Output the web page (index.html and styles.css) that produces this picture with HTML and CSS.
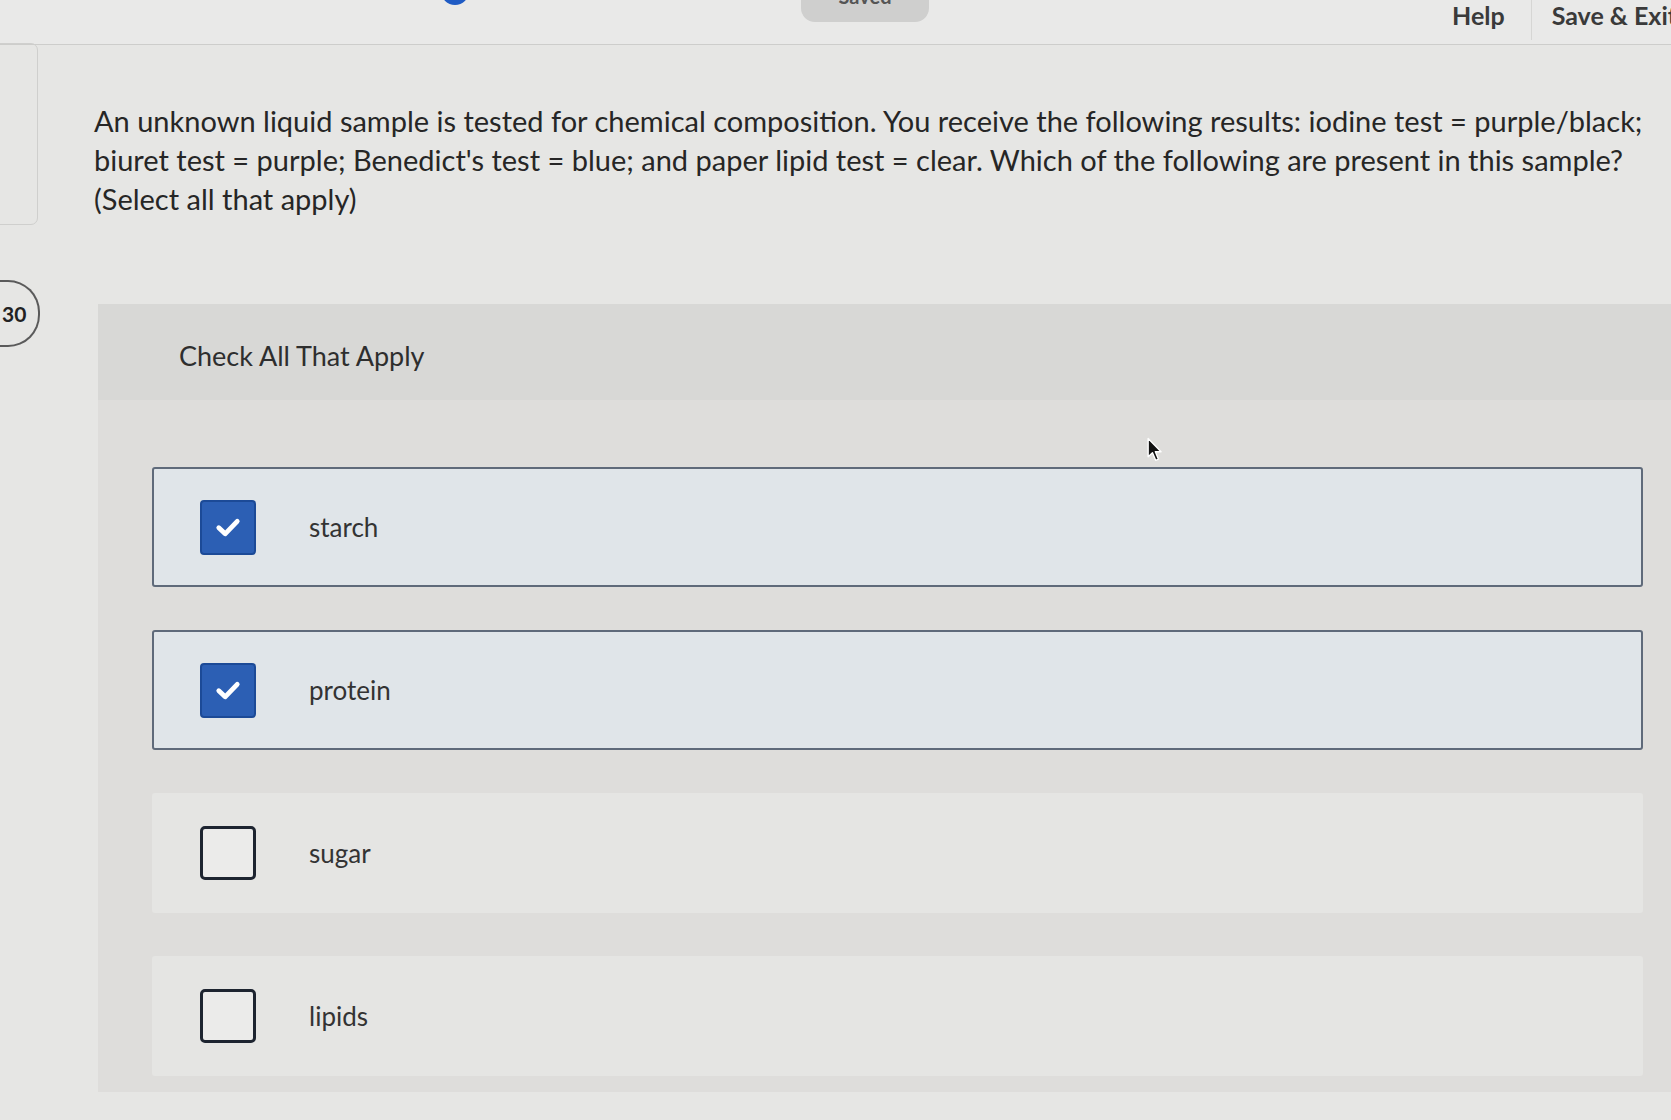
FILE: index.html
```html
<!DOCTYPE html>
<html lang="en">
<head>
<meta charset="utf-8">
<title>Check All That Apply</title>
<link rel="stylesheet" href="styles.css">
</head>
<body>
<div class="page">
  <header class="topbar">
    <span class="dot"></span>
    <span class="saved">Saved</span>
    <nav class="nav">
      <span class="help">Help</span>
      <span class="divider"></span>
      <span class="save">Save &amp; Exit</span>
    </nav>
  </header>

  <div class="content">
    <aside class="side">
      <div class="sidecard"></div>
      <div class="qnum">30</div>
    </aside>

    <main class="main">
      <p class="question">An unknown liquid sample is tested for chemical composition. You receive the following results: iodine test = purple/black;<br>biuret test = purple; Benedict's test = blue; and paper lipid test = clear. Which of the following are present in this sample?<br>(Select all that apply)</p>

      <section class="panel">
        <div class="panel-head">Check All That Apply</div>
        <ul class="options">
          <li class="option selected">
            <span class="box checked"><svg viewBox="0 0 24 24" width="34" height="34"><polyline points="5.5,12.5 10,16.8 18.5,8" fill="none" stroke="#fff" stroke-width="3.4" stroke-linecap="round" stroke-linejoin="round"/></svg></span>
            <span class="label">starch</span>
          </li>
          <li class="option selected">
            <span class="box checked"><svg viewBox="0 0 24 24" width="34" height="34"><polyline points="5.5,12.5 10,16.8 18.5,8" fill="none" stroke="#fff" stroke-width="3.4" stroke-linecap="round" stroke-linejoin="round"/></svg></span>
            <span class="label">protein</span>
          </li>
          <li class="option">
            <span class="box"></span>
            <span class="label">sugar</span>
          </li>
          <li class="option">
            <span class="box"></span>
            <span class="label">lipids</span>
          </li>
        </ul>
      </section>
    </main>
  </div>

  <svg class="cursor" width="16" height="26" viewBox="0 0 14 22"><path d="M1 1 L1 17 L4.8 13.4 L7.6 20 L10 19 L7.3 12.5 L12.3 12.5 Z" fill="#111" stroke="#fff" stroke-width="1.2" stroke-linejoin="round"/></svg>
</div>
</body>
</html>
```
FILE: styles.css
```css
html, body {
  margin: 0;
  padding: 0;
}
body {
  width: 1671px;
  height: 1120px;
  overflow: hidden;
  background: #e6e6e4;
  font-family: Lato, "Open Sans", Arial, sans-serif;
  color: #2c2c2c;
}
.page {
  position: relative;
  width: 1671px;
  height: 1120px;
  overflow: hidden;
}

/* top bar */
.topbar {
  display: flex;
  align-items: flex-start;
  height: 44px;
  border-bottom: 1px solid #cdcdcb;
  background: #e9e9e8;
}
.dot {
  flex: 0 0 auto;
  width: 28px;
  height: 28px;
  margin-left: 441px;
  margin-top: -23px;
  border-radius: 50%;
  background: #1f5bc4;
}
.saved {
  flex: 0 0 auto;
  width: 128px;
  height: 36px;
  margin-left: 332px;
  margin-top: -14px;
  border-radius: 14px;
  background: #cfcfce;
  color: #555;
  font-weight: 700;
  font-size: 20px;
  line-height: 20px;
  text-align: center;
}
.nav {
  flex: 0 0 auto;
  display: flex;
  align-items: flex-start;
  margin-left: 523px;
  white-space: nowrap;
}
.help, .save {
  font-size: 25px;
  font-weight: 700;
  color: #3a3a3a;
  line-height: 30px;
}
.help {
  padding-right: 26px;
}
.divider {
  width: 1px;
  height: 40px;
  background: #d6d6d4;
}
.save {
  padding-left: 20px;
}

/* content */
.content {
  display: flex;
  align-items: flex-start;
}
.side {
  flex: 0 0 96px;
  display: flex;
  flex-direction: column;
  align-items: flex-start;
}
.sidecard {
  width: 36px;
  height: 180px;
  margin-top: -2px;
  margin-left: -10px;
  border: 1px solid #cfcfcd;
  border-radius: 0 7px 7px 0;
  padding-left: 10px;
  box-sizing: content-box;
}
.qnum {
  width: 28px;
  height: 63px;
  margin-top: 55px;
  margin-left: -10px;
  padding-left: 12px;
  padding-right: 8px;
  box-sizing: content-box;
  border: 2px solid #5a5a5a;
  border-left: none;
  border-radius: 0 32px 32px 0;
  font-size: 21px;
  font-weight: 700;
  color: #222;
  display: flex;
  align-items: center;
}
.main {
  flex: 0 0 auto;
  width: 1620px;
}
.question {
  margin: 56px 0 0 -2px;
  font-size: 29px;
  line-height: 39px;
  color: #262626;
  white-space: nowrap;
}

/* panel */
.panel {
  margin-top: 86px;
  margin-left: 2px;
  background: #dedddb;
  padding-bottom: 16px;
}
.panel-head {
  height: 96px;
  box-sizing: border-box;
  padding-top: 6px;
  background: #d8d8d6;
  display: flex;
  align-items: center;
  padding-left: 81px;
  font-size: 27px;
  color: #2e2e2e;
}
.options {
  list-style: none;
  margin: 0;
  padding: 67px 73px 0 54px;
  display: flex;
  flex-direction: column;
  gap: 43px;
}
.option {
  height: 120px;
  box-sizing: border-box;
  display: flex;
  align-items: center;
  padding-left: 46px;
  gap: 53px;
  border: 2px solid transparent;
  border-radius: 3px;
  background: #e5e5e3;
}
.option.selected {
  background: #e0e5e9;
  border-color: #5f6a7a;
}
.box {
  flex: 0 0 auto;
  width: 56px;
  height: 54px;
  box-sizing: border-box;
  border: 3px solid #1d2430;
  border-radius: 5px;
  background: #ebebea;
  display: flex;
  align-items: center;
  justify-content: center;
}
.box.checked {
  width: 56px;
  height: 55px;
  background: #2c5fb4;
  border: 2px solid #1c4a97;
  border-radius: 4px;
}
.label {
  font-size: 26px;
  color: #333;
}

.cursor {
  position: absolute;
  left: 1147px;
  top: 437px;
}
```
